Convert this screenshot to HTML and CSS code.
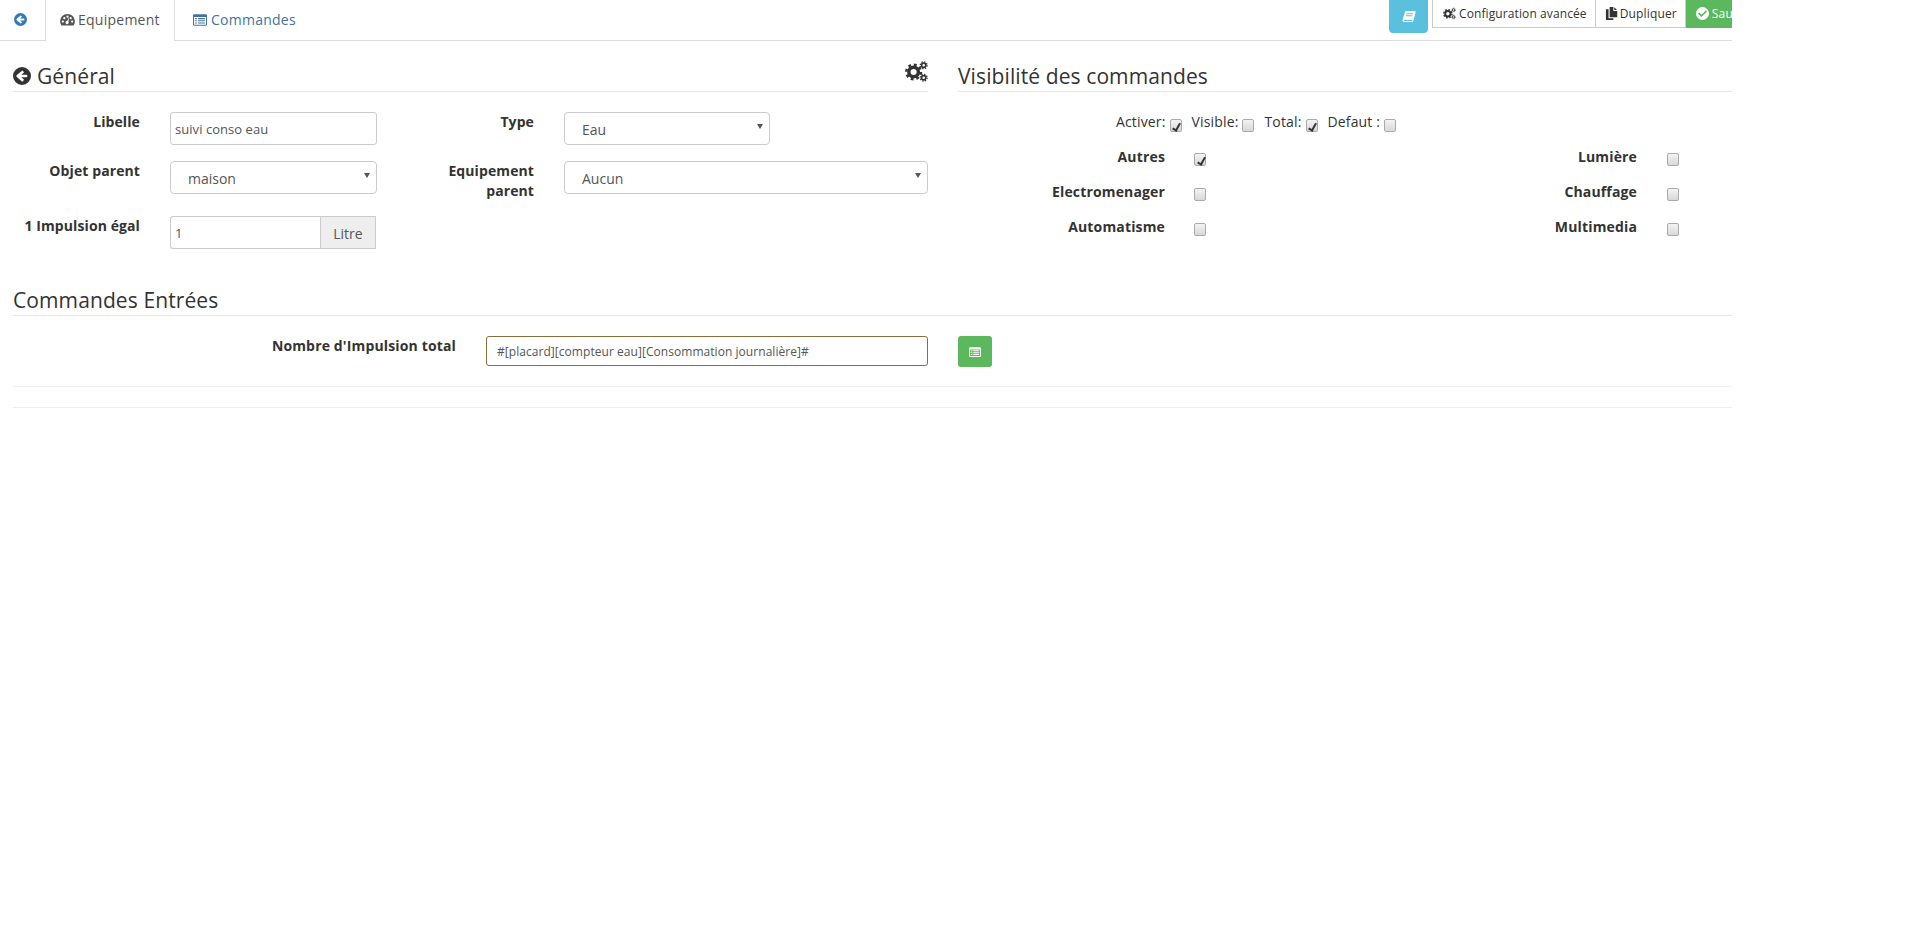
FILE: index.html
```html
<!DOCTYPE html>
<html lang="fr">
<head>
<meta charset="utf-8">
<title>Equipement</title>
<link rel="stylesheet" href="styles.css">
</head>
<body>
<svg class="defs" width="0" height="0" aria-hidden="true">
  <symbol id="i-back" viewBox="0 0 16 16"><path fill-rule="evenodd" d="M8 0a8 8 0 1 1 0 16A8 8 0 0 1 8 0zM8.3 3 3.4 7.2a1 1 0 0 0 0 1.6l4.9 4.2 1.6-1.6-2.500-2.200h4.600a.7.7 0 0 0 .7-.7V7.500a.7.7 0 0 0-.7-.7H7.400l2.500-2.200z"/></symbol>
  <symbol id="i-cogs" viewBox="0 0 24 24">
    <g fill="none" stroke="currentColor">
      <circle cx="9" cy="12.500" r="5" stroke-width="3.600"/>
      <circle cx="9" cy="12.500" r="7.600" stroke-width="2.600" stroke-dasharray="3 2.970"/>
      <circle cx="19.500" cy="5.500" r="2.200" stroke-width="1.700"/>
      <circle cx="19.500" cy="5.500" r="3.600" stroke-width="1.300" stroke-dasharray="1.400 1.430"/>
      <circle cx="19.500" cy="18.500" r="2.200" stroke-width="1.700"/>
      <circle cx="19.500" cy="18.500" r="3.600" stroke-width="1.300" stroke-dasharray="1.400 1.430"/>
    </g>
  </symbol>
  <symbol id="i-gauge" viewBox="0 0 16 14"><path fill-rule="evenodd" d="M8 1a8 8 0 0 1 8 8c0 1.700-.5 3.200-1.400 4.500H1.400A8 8 0 0 1 0 9a8 8 0 0 1 8-8zM3 8a1.200 1.200 0 1 0 0 2.400A1.200 1.200 0 0 0 3 8zm1.600-3.600a1.200 1.200 0 1 0 0 2.400 1.200 1.200 0 0 0 0-2.400zM8 2.800a1.200 1.200 0 1 0 0 2.400 1.200 1.200 0 0 0 0-2.400zm3.400 1.600a1.200 1.200 0 1 0 0 2.400 1.200 1.200 0 0 0 0-2.400zM13 8a1.200 1.200 0 1 0 0 2.400A1.200 1.200 0 0 0 13 8zM9.700 4.800 7.500 8.500a1.700 1.700 0 1 0 1.500.8z"/></symbol>
  <symbol id="i-list" viewBox="0 0 16 13"><path fill-rule="evenodd" d="M1.300 0h13.400A1.300 1.300 0 0 1 16 1.300v10.400a1.300 1.300 0 0 1-1.300 1.300H1.300A1.300 1.300 0 0 1 0 11.700V1.300A1.300 1.300 0 0 1 1.300 0zM1.200 3v8.600c0 .1.100.2.200.2h13.200c.1 0 .2-.1.200-.2V3zM2.400 4.300h2v1.200h-2zm3.200 0h8v1.200h-8zM2.400 6.800h2V8h-2zm3.200 0h8V8h-8zM2.400 9.300h2v1.200h-2zm3.200 0h8v1.200h-8z"/></symbol>
  <symbol id="i-book" viewBox="0 0 14 14"><path fill-rule="evenodd" d="M3.800 1h9c.7 0 1 .5.800 1.200l-2.300 8.500c-.2.700-.9 1.300-1.600 1.300H2c-1 0-1.800-.9-1.500-2.200L3 2c.1-.6.400-1 .8-1zm.7 2.300-.2.900h6.500l.2-.9zm-.6 2-.2.900h6.500l.2-.9zM2.300 10c-.3 0-.5.200-.5.500s.2.500.5.500h7.900l.3-1z"/></symbol>
  <symbol id="i-copy" viewBox="0 0 14 14"><path d="M5 0h4v4.200h4.200V11H5z"/><path d="M10 .2 13 3.300H10zM3.800 2.500V12.200H9V14H1V2.500z"/></symbol>
  <symbol id="i-check" viewBox="0 0 16 16"><path fill-rule="evenodd" d="M8 0a8 8 0 1 1 0 16A8 8 0 0 1 8 0zm4.200 4.200L6.800 9.600 4 6.800 2.600 8.200l4.200 4.200 6.800-6.800z"/></symbol>
</svg>

<div class="page">
  <header class="topbar">
    <nav class="tabs">
      <a class="tab tab-back"><svg class="ico ico-back"><use href="#i-back"/></svg></a>
      <a class="tab tab-active"><svg class="ico ico-gauge"><use href="#i-gauge"/></svg>Equipement</a>
      <a class="tab tab-link"><svg class="ico ico-list"><use href="#i-list"/></svg>Commandes</a>
    </nav>
    <div class="actions">
      <a class="btn-doc"><svg class="ico ico-book"><use href="#i-book"/></svg></a>
      <div class="btn-group">
        <a class="btn btn-config"><svg class="ico ico-small"><use href="#i-cogs"/></svg>Configuration avancée</a>
        <a class="btn btn-dup"><svg class="ico ico-small"><use href="#i-copy"/></svg>Dupliquer</a>
        <a class="btn btn-save"><svg class="ico ico-small"><use href="#i-check"/></svg>Sauvegarder</a>
      </div>
    </div>
  </header>

  <main class="content">
    <div class="columns">
      <section class="col-left">
        <h2 class="legend">
          <svg class="ico ico-legend"><use href="#i-back"/></svg>Général
          <svg class="ico ico-cogs"><use href="#i-cogs"/></svg>
        </h2>
        <div class="form-grid">
          <label class="lbl">Libelle</label>
          <input class="field" type="text" value="suivi conso eau">
          <label class="lbl">Type</label>
          <div class="select select-short"><span class="select-value">Eau</span></div>

          <label class="lbl">Objet parent</label>
          <div class="select"><span class="select-value">maison</span></div>
          <label class="lbl lbl-wrap">Equipement parent</label>
          <div class="select"><span class="select-value">Aucun</span></div>

          <label class="lbl lbl-third">1 Impulsion égal</label>
          <div class="input-group">
            <input class="field field-joined" type="text" value="1">
            <span class="addon">Litre</span>
          </div>
        </div>
      </section>

      <section class="col-right">
        <h2 class="legend">Visibilité des commandes</h2>
        <div class="flags">
          <label class="flag">Activer:<input class="cb" type="checkbox" checked></label>
          <label class="flag">Visible:<input class="cb" type="checkbox"></label>
          <label class="flag">Total:<input class="cb" type="checkbox" checked></label>
          <label class="flag">Defaut :<input class="cb" type="checkbox"></label>
        </div>
        <div class="cats">
          <label class="cat-lbl">Autres</label><span class="cat-box"><input class="cb" type="checkbox" checked></span>
          <label class="cat-lbl">Lumière</label><span class="cat-box cat-box-end"><input class="cb" type="checkbox"></span>
          <label class="cat-lbl">Electromenager</label><span class="cat-box"><input class="cb" type="checkbox"></span>
          <label class="cat-lbl">Chauffage</label><span class="cat-box cat-box-end"><input class="cb" type="checkbox"></span>
          <label class="cat-lbl">Automatisme</label><span class="cat-box"><input class="cb" type="checkbox"></span>
          <label class="cat-lbl">Multimedia</label><span class="cat-box cat-box-end"><input class="cb" type="checkbox"></span>
        </div>
      </section>
    </div>

    <section class="inputs">
      <h2 class="legend">Commandes Entrées</h2>
      <div class="cmd-row">
        <label class="cmd-lbl">Nombre d'Impulsion total</label>
        <input class="field field-cmd" type="text" value="#[placard][compteur eau][Consommation journalière]#">
        <a class="btn-list"><svg class="ico ico-btnlist"><use href="#i-list"/></svg></a>
      </div>
      <hr class="rule">
      <hr class="rule rule-last">
    </section>
  </main>
</div>
</body>
</html>
```

FILE: styles.css
```css
* { box-sizing: border-box; }

html, body {
  margin: 0;
  padding: 0;
  background: #fff;
}

body {
  font-family: "Open Sans", "Liberation Sans", sans-serif;
  font-size: 14px;
  line-height: 20px;
  color: #333;
}

.defs { display: block; height: 0; }

.page {
  width: 1732px;
  overflow: hidden;
}

.ico { display: inline-block; fill: currentColor; flex: none; }

/* Top bar */
.topbar {
  display: flex;
  height: 41px;
  border-bottom: 1px solid #ddd;
}

.tabs {
  display: flex;
  width: 1389px;
  flex: none;
}

.tab {
  display: flex;
  align-items: center;
  gap: 4px;
  height: 41px;
  padding: 0 15px 2px;
  color: #44739e;
  letter-spacing: .25px;
  white-space: nowrap;
}

.tab-back { width: 45px; padding: 0 0 2px 14px; color: #337ab7; }

.tab-active {
  width: 130px;
  padding-left: 14px;
  color: #555;
  background: #fff;
  border: 1px solid #ddd;
  border-top: 0;
  border-bottom: 0;
  gap: 3px;
}

.tab-link { padding-left: 18px; }

.ico-back { width: 13px; height: 13px; }
.ico-gauge { width: 15px; height: 13px; }
.ico-list { width: 14px; height: 12px; }

.actions {
  display: flex;
  flex: none;
  align-items: flex-start;
  gap: 4px;
}

.btn-doc {
  display: flex;
  align-items: center;
  justify-content: center;
  width: 39px;
  height: 33px;
  background: #5bc0de;
  color: #fff;
  border-radius: 0 0 4px 4px;
}

.ico-book { width: 14px; height: 14px; }

.btn-group { display: flex; }

.btn {
  display: flex;
  align-items: center;
  gap: 3px;
  height: 28px;
  padding: 0 8px 0 10px;
  font-size: 12px;
  letter-spacing: .15px;
  color: #333;
  background: #fff;
  border: 1px solid #ccc;
  border-top: 0;
  white-space: nowrap;
}

.btn + .btn { border-left: 0; }

.btn-config { letter-spacing: .1px; }

.btn-dup { gap: 2px; padding-left: 9px; }

.btn-save {
  color: #fff;
  background: #5cb85c;
  border-color: #5cb85c;
}

.ico-small { width: 13px; height: 13px; }

/* Content */
.content { padding: 0 0 0 13px; }

.columns {
  display: grid;
  grid-template-columns: 915px 774px;
  column-gap: 30px;
}

.legend {
  display: flex;
  align-items: flex-start;
  height: 31px;
  margin: 20px 0 0;
  font-size: 21px;
  font-weight: 400;
  line-height: 30px;
  letter-spacing: .1px;
  color: #333;
  border-bottom: 1px solid #e5e5e5;
}

.ico-legend { width: 18px; height: 18px; margin: 6px 6px 0 0; }

.ico-cogs {
  width: 23px;
  height: 23px;
  margin-left: auto;
  margin-top: -1px;
}

.form-grid {
  display: grid;
  grid-template-columns: 157px 207px 187px 364px;
  grid-auto-rows: 33px;
  row-gap: 16px;
  margin-top: 20px;
}

.lbl {
  padding-right: 30px;
  font-weight: 700;
  letter-spacing: .1px;
  text-align: right;
}

.lbl-wrap { padding-left: 40px; }

.lbl-third, .input-group { margin-top: 6px; }

.field {
  height: 33px;
  padding: 4px;
  font-family: inherit;
  font-size: 13px;
  letter-spacing: .05px;
  color: #555;
  background: #fff;
  border: 1px solid #ccc;
  border-radius: 3px;
  outline: 0;
}

.select {
  position: relative;
  height: 33px;
  padding: 7px 17px;
  font-size: 14px;
  color: #555;
  background: #fff;
  border: 1px solid #ccc;
  border-radius: 4px;
}

.select::after {
  content: "";
  position: absolute;
  right: 6px;
  top: 11px;
  border-style: solid;
  border-width: 5px 3px 0;
  border-color: #555 transparent transparent;
}

.select-short { width: 206px; }

.input-group { display: flex; width: 206px; height: 33px; }

.field-joined {
  width: 150px;
  border-radius: 3px 0 0 3px;
  border-right: 0;
}

.addon {
  width: 56px;
  height: 33px;
  line-height: 33px;
  text-align: center;
  color: #555;
  background: #eee;
  border: 1px solid #ccc;
}

/* Visibility */
.flags {
  display: flex;
  gap: 10px;
  height: 20px;
  margin-top: 20px;
  padding-left: 158px;
}

.flag {
  display: flex;
  align-items: flex-start;
  gap: 4px;
  letter-spacing: .15px;
  line-height: 20px;
}

.cb {
  appearance: none;
  position: relative;
  width: 12px;
  height: 13px;
  margin: 7px 0 0;
  background: linear-gradient(#f4f4f4, #d8d8d8);
  border: 1px solid #aaa;
  border-radius: 2px;
}

.cb:checked::after {
  content: "";
  position: absolute;
  left: 3.5px;
  top: 1.5px;
  width: 3px;
  height: 7px;
  border: solid #333;
  border-width: 0 2px 2px 0;
  transform: rotate(30deg);
}

.cats {
  display: grid;
  grid-template-columns: 207px 237px 235px 95px;
  grid-auto-rows: 35px;
  margin-top: 15px;
}

.cat-lbl {
  font-weight: 700;
  letter-spacing: .15px;
  text-align: right;
  line-height: 20px;
}

.cat-box { padding-left: 29px; display: block; }
.cat-box-end { padding-left: 30px; }
.cat-box .cb { margin-top: 6px; }

/* Commandes */
.inputs .legend { margin-top: 33px; }
.inputs { width: 1719px; }

.cmd-row {
  display: grid;
  grid-template-columns: 443px 30px 442px 30px 34px;
  margin-top: 20px;
  height: 31px;
}

.cmd-lbl {
  grid-column: 1;
  font-weight: 700;
  letter-spacing: .15px;
  text-align: right;
}

.field-cmd {
  grid-column: 3;
  height: 30px;
  padding: 4px 10px;
  font-size: 12px;
  letter-spacing: .05px;
  color: #555;
  border-color: #8a6d3b;
  border-radius: 3px;
}

.btn-list {
  grid-column: 5;
  display: flex;
  align-items: center;
  justify-content: center;
  height: 31px;
  color: #fff;
  background: #5cb85c;
  border-radius: 3px;
}

.ico-btnlist { width: 12px; height: 10px; }

.rule {
  height: 1px;
  margin: 19px 0 0;
  background: #eee;
  border: 0;
}

.rule-last { margin-top: 20px; }
```
